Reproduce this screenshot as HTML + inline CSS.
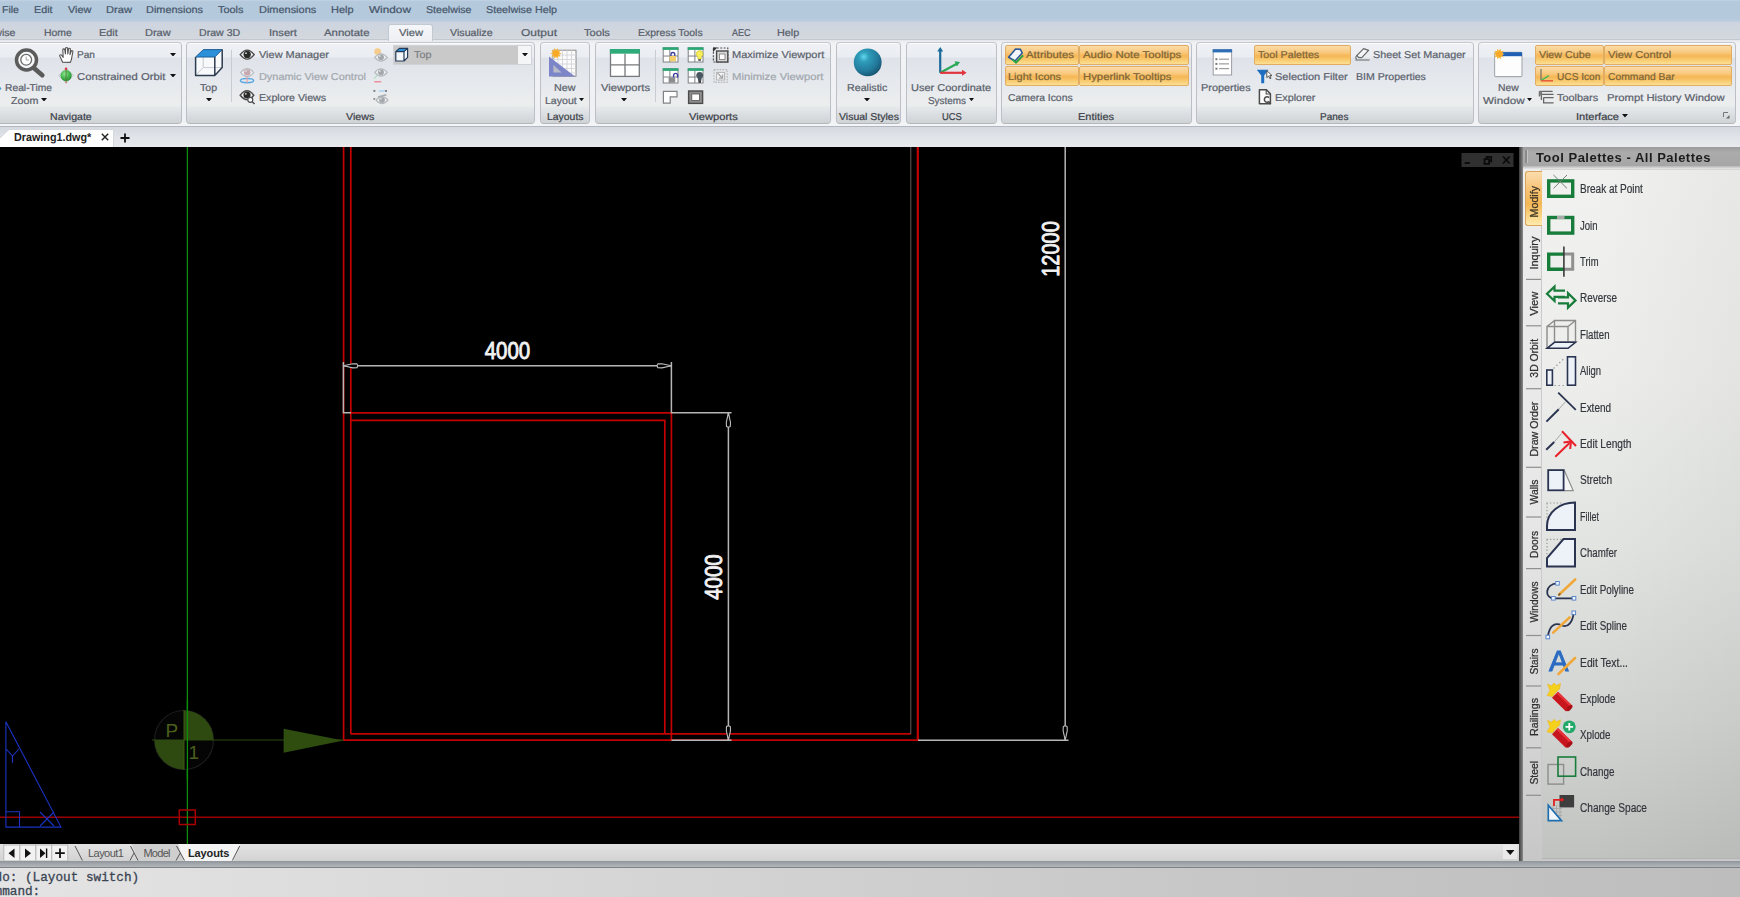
<!DOCTYPE html>
<html lang="en"><head><meta charset="utf-8"><title>Drawing1.dwg</title>
<style>
html,body{margin:0;padding:0}
body{width:1740px;height:897px;overflow:hidden;position:relative;background:#000;font-family:"Liberation Sans",sans-serif}
#app{position:absolute;left:0;top:0;width:1740px;height:897px;overflow:hidden;filter:blur(0.5px)}
.a{position:absolute;display:block}
.t{position:absolute;white-space:pre;line-height:1;display:block}
.pnl{box-sizing:border-box;border:1px solid #c3c7cd;border-radius:4px;
 border-color:#c4c8ce #bcc0c6 #b4b8be #bcc0c6;
 background:linear-gradient(#eff1f5 0,#eaedf1 17%,#dfe3e9 19%,#e5e8ed 45%,#eceeee 78%,#e6e9ec 80%,#d0d3d6 100%);
 box-shadow:inset 0 1px 0 rgba(255,255,255,.8)}
.org{box-sizing:border-box;border:1px solid #e0ad62;border-radius:2px;
 background:linear-gradient(#fbdba8 0,#f9ca80 35%,#f6b655 55%,#f9cb70 78%,#fce095 100%)}
</style></head>
<body>
<div id="app">
<div class="a" style="left:0px;top:0px;width:1740px;height:22px;background:linear-gradient(#c2d3e3 0,#b4c9dc 8%,#b4c9dc 85%,#bfcfdf)"></div>
<div class="a" style="left:0px;top:22px;width:1740px;height:18px;background:linear-gradient(#cdd5e0,#d1d6de 50%,#d4d8df)"></div>
<div class="a" style="left:0px;top:39px;width:1740px;height:1px;background:#c3c8d0"></div>
<div class="a" style="left:0px;top:40px;width:1740px;height:86px;background:linear-gradient(#e4e7ec,#f1f3f5 4%,#eef0f3 90%,#f4f5f7)"></div>
<div class="a" style="left:0px;top:126px;width:1740px;height:1px;background:#b3b8c0"></div>
<div class="a" style="left:0px;top:127px;width:1740px;height:20px;background:linear-gradient(#d5d9e0,#e0e3e8 50%,#e8eaed)"></div>
<span class="t" style="left:2.0px;top:6px;font-size:10px;color:#46566a;transform:scaleX(1.0543);transform-origin:0 0;text-rendering:geometricPrecision;-webkit-text-stroke:0.22px;">File</span>
<span class="t" style="left:34.0px;top:6px;font-size:10px;color:#46566a;transform:scaleX(1.0734);transform-origin:0 0;text-rendering:geometricPrecision;-webkit-text-stroke:0.22px;">Edit</span>
<span class="t" style="left:67.5px;top:6px;font-size:10px;color:#46566a;transform:scaleX(1.0930);transform-origin:0 0;text-rendering:geometricPrecision;-webkit-text-stroke:0.22px;">View</span>
<span class="t" style="left:106.0px;top:6px;font-size:10px;color:#46566a;transform:scaleX(1.1138);transform-origin:0 0;text-rendering:geometricPrecision;-webkit-text-stroke:0.22px;">Draw</span>
<span class="t" style="left:146.0px;top:6px;font-size:10px;color:#46566a;transform:scaleX(1.0909);transform-origin:0 0;text-rendering:geometricPrecision;-webkit-text-stroke:0.22px;">Dimensions</span>
<span class="t" style="left:218.0px;top:6px;font-size:10px;color:#46566a;transform:scaleX(1.0916);transform-origin:0 0;text-rendering:geometricPrecision;-webkit-text-stroke:0.22px;">Tools</span>
<span class="t" style="left:259.3px;top:6px;font-size:10px;color:#46566a;transform:scaleX(1.0947);transform-origin:0 0;text-rendering:geometricPrecision;-webkit-text-stroke:0.22px;">Dimensions</span>
<span class="t" style="left:331.4px;top:6px;font-size:10px;color:#46566a;transform:scaleX(1.0983);transform-origin:0 0;text-rendering:geometricPrecision;-webkit-text-stroke:0.22px;">Help</span>
<span class="t" style="left:368.6px;top:6px;font-size:10px;color:#46566a;transform:scaleX(1.1777);transform-origin:0 0;text-rendering:geometricPrecision;-webkit-text-stroke:0.22px;">Window</span>
<span class="t" style="left:425.5px;top:6px;font-size:10px;color:#46566a;transform:scaleX(1.0628);transform-origin:0 0;text-rendering:geometricPrecision;-webkit-text-stroke:0.22px;">Steelwise</span>
<span class="t" style="left:486.0px;top:6px;font-size:10px;color:#46566a;transform:scaleX(1.0732);transform-origin:0 0;text-rendering:geometricPrecision;-webkit-text-stroke:0.22px;">Steelwise Help</span>
<div class="a" style="left:388px;top:24px;width:45px;height:17px;background:linear-gradient(#f4f6f9,#eef0f3);border:1px solid #c3c9d1;border-bottom:none;border-radius:3px 3px 0 0;box-sizing:border-box"></div>
<span class="t" style="left:-30.3px;top:29px;font-size:10px;color:#565e6a;transform:scaleX(1.0628);transform-origin:0 0;text-rendering:geometricPrecision;-webkit-text-stroke:0.22px;">Steelwise</span>
<span class="t" style="left:43.6px;top:29px;font-size:10px;color:#565e6a;transform:scaleX(1.0454);transform-origin:0 0;text-rendering:geometricPrecision;-webkit-text-stroke:0.22px;">Home</span>
<span class="t" style="left:99.0px;top:29px;font-size:10px;color:#565e6a;transform:scaleX(1.0908);transform-origin:0 0;text-rendering:geometricPrecision;-webkit-text-stroke:0.22px;">Edit</span>
<span class="t" style="left:145.0px;top:29px;font-size:10px;color:#565e6a;transform:scaleX(1.1009);transform-origin:0 0;text-rendering:geometricPrecision;-webkit-text-stroke:0.22px;">Draw</span>
<span class="t" style="left:198.8px;top:29px;font-size:10px;color:#565e6a;transform:scaleX(1.0590);transform-origin:0 0;text-rendering:geometricPrecision;-webkit-text-stroke:0.22px;">Draw 3D</span>
<span class="t" style="left:268.5px;top:29px;font-size:10px;color:#565e6a;transform:scaleX(1.1153);transform-origin:0 0;text-rendering:geometricPrecision;-webkit-text-stroke:0.22px;">Insert</span>
<span class="t" style="left:324.4px;top:29px;font-size:10px;color:#565e6a;transform:scaleX(1.1387);transform-origin:0 0;text-rendering:geometricPrecision;-webkit-text-stroke:0.22px;">Annotate</span>
<span class="t" style="left:398.6px;top:29px;font-size:10px;color:#565e6a;transform:scaleX(1.1209);transform-origin:0 0;text-rendering:geometricPrecision;-webkit-text-stroke:0.22px;">View</span>
<span class="t" style="left:450.4px;top:29px;font-size:10px;color:#565e6a;transform:scaleX(1.0692);transform-origin:0 0;text-rendering:geometricPrecision;-webkit-text-stroke:0.22px;">Visualize</span>
<span class="t" style="left:521.4px;top:29px;font-size:10px;color:#565e6a;transform:scaleX(1.1988);transform-origin:0 0;text-rendering:geometricPrecision;-webkit-text-stroke:0.22px;">Output</span>
<span class="t" style="left:584.3px;top:29px;font-size:10px;color:#565e6a;transform:scaleX(1.1088);transform-origin:0 0;text-rendering:geometricPrecision;-webkit-text-stroke:0.22px;">Tools</span>
<span class="t" style="left:638.4px;top:29px;font-size:10px;color:#565e6a;transform:scaleX(1.0406);transform-origin:0 0;text-rendering:geometricPrecision;-webkit-text-stroke:0.22px;">Express Tools</span>
<span class="t" style="left:731.6px;top:29px;font-size:10px;color:#565e6a;transform:scaleX(0.9046);transform-origin:0 0;text-rendering:geometricPrecision;-webkit-text-stroke:0.22px;">AEC</span>
<span class="t" style="left:777.4px;top:29px;font-size:10px;color:#565e6a;transform:scaleX(1.0788);transform-origin:0 0;text-rendering:geometricPrecision;-webkit-text-stroke:0.22px;">Help</span>
<div class="a pnl" style="left:-6px;top:42px;width:187.5px;height:82px"></div>
<div class="a pnl" style="left:186px;top:42px;width:348.5px;height:82px"></div>
<div class="a pnl" style="left:539.5px;top:42px;width:50.5px;height:82px"></div>
<div class="a pnl" style="left:595px;top:42px;width:236px;height:82px"></div>
<div class="a pnl" style="left:836px;top:42px;width:65px;height:82px"></div>
<div class="a pnl" style="left:906px;top:42px;width:91px;height:82px"></div>
<div class="a pnl" style="left:1001px;top:42px;width:191px;height:82px"></div>
<div class="a pnl" style="left:1195.5px;top:42px;width:278.0px;height:82px"></div>
<div class="a pnl" style="left:1477.5px;top:42px;width:258.0px;height:82px"></div>
<span class="t" style="left:49.7px;top:113px;font-size:10px;color:#3a3f48;transform:scaleX(1.0565);transform-origin:0 0;text-rendering:geometricPrecision;-webkit-text-stroke:0.22px;">Navigate</span>
<span class="t" style="left:345.6px;top:113px;font-size:10px;color:#3a3f48;transform:scaleX(1.0717);transform-origin:0 0;text-rendering:geometricPrecision;-webkit-text-stroke:0.22px;">Views</span>
<span class="t" style="left:546.5px;top:113px;font-size:10px;color:#3a3f48;transform:scaleX(1.0419);transform-origin:0 0;text-rendering:geometricPrecision;-webkit-text-stroke:0.22px;">Layouts</span>
<span class="t" style="left:688.6px;top:113px;font-size:10px;color:#3a3f48;transform:scaleX(1.1158);transform-origin:0 0;text-rendering:geometricPrecision;-webkit-text-stroke:0.22px;">Viewports</span>
<span class="t" style="left:838.7px;top:113px;font-size:10px;color:#3a3f48;transform:scaleX(1.0494);transform-origin:0 0;text-rendering:geometricPrecision;-webkit-text-stroke:0.22px;">Visual Styles</span>
<span class="t" style="left:941.6px;top:113px;font-size:10px;color:#3a3f48;transform:scaleX(0.9373);transform-origin:0 0;text-rendering:geometricPrecision;-webkit-text-stroke:0.22px;">UCS</span>
<span class="t" style="left:1078.4px;top:113px;font-size:10px;color:#3a3f48;transform:scaleX(1.1007);transform-origin:0 0;text-rendering:geometricPrecision;-webkit-text-stroke:0.22px;">Entities</span>
<span class="t" style="left:1320.2px;top:113px;font-size:10px;color:#3a3f48;transform:scaleX(1.0014);transform-origin:0 0;text-rendering:geometricPrecision;-webkit-text-stroke:0.22px;">Panes</span>
<span class="t" style="left:1575.6px;top:113px;font-size:10px;color:#3a3f48;transform:scaleX(1.1048);transform-origin:0 0;text-rendering:geometricPrecision;-webkit-text-stroke:0.22px;">Interface</span>
<svg class="a" style="left:1622.0px;top:114.2px" width="6" height="3.5" viewBox="0 0 6 3.5"><path d="M0 0H6L3.0 3.5Z" fill="#111"/></svg>
<svg class="a" style="left:1723px;top:112px" width="7" height="7" viewBox="0 0 7 7"><path d="M0.5 5V0.5H5" fill="none" stroke="#777"/><path d="M3 6.5H6.5V3Z" fill="#666"/></svg>
<span class="t" style="left:5.0px;top:84px;font-size:10px;color:#5a616c;transform:scaleX(1.0273);transform-origin:0 0;text-rendering:geometricPrecision;-webkit-text-stroke:0.22px;">Real-Time</span>
<span class="t" style="left:10.7px;top:97px;font-size:10px;color:#5a616c;transform:scaleX(1.0680);transform-origin:0 0;text-rendering:geometricPrecision;-webkit-text-stroke:0.22px;">Zoom</span>
<svg class="a" style="left:41.0px;top:97.8px" width="6" height="3.5" viewBox="0 0 6 3.5"><path d="M0 0H6L3.0 3.5Z" fill="#111"/></svg>
<span class="t" style="left:77.0px;top:51px;font-size:10px;color:#5a616c;transform:scaleX(1.0114);transform-origin:0 0;text-rendering:geometricPrecision;-webkit-text-stroke:0.22px;">Pan</span>
<svg class="a" style="left:170.0px;top:52.8px" width="6" height="3.5" viewBox="0 0 6 3.5"><path d="M0 0H6L3.0 3.5Z" fill="#111"/></svg>
<span class="t" style="left:77.0px;top:73px;font-size:10px;color:#5a616c;transform:translateY(-0.5px) scaleX(1.1292);transform-origin:0 0;text-rendering:geometricPrecision;-webkit-text-stroke:0.22px;">Constrained Orbit</span>
<svg class="a" style="left:170.3px;top:73.8px" width="6" height="3.5" viewBox="0 0 6 3.5"><path d="M0 0H6L3.0 3.5Z" fill="#111"/></svg>
<span class="t" style="left:200.0px;top:84px;font-size:10px;color:#5a616c;transform:scaleX(1.0543);transform-origin:0 0;text-rendering:geometricPrecision;-webkit-text-stroke:0.22px;">Top</span>
<svg class="a" style="left:205.6px;top:97.8px" width="6" height="3.5" viewBox="0 0 6 3.5"><path d="M0 0H6L3.0 3.5Z" fill="#111"/></svg>
<div class="a" style="left:231px;top:50px;width:1px;height:52px;background:#c9cdd3"></div>
<span class="t" style="left:258.9px;top:51px;font-size:10px;color:#5a616c;transform:scaleX(1.0965);transform-origin:0 0;text-rendering:geometricPrecision;-webkit-text-stroke:0.22px;">View Manager</span>
<span class="t" style="left:258.9px;top:73px;font-size:10px;color:#a2a7ae;transform:translateY(-0.5px) scaleX(1.0898);transform-origin:0 0;text-rendering:geometricPrecision;-webkit-text-stroke:0.22px;">Dynamic View Control</span>
<span class="t" style="left:258.9px;top:94px;font-size:10px;color:#5a616c;transform:translateY(-0.5px) scaleX(1.0619);transform-origin:0 0;text-rendering:geometricPrecision;-webkit-text-stroke:0.22px;">Explore Views</span>
<div class="a" style="left:392.5px;top:45px;width:139px;height:20px;background:#f4f5f6;border:1px solid #d0d3d8;box-sizing:border-box"></div>
<div class="a" style="left:393.5px;top:46px;width:124.5px;height:18px;background:#c9c9c9"></div>
<span class="t" style="left:414.0px;top:51px;font-size:10px;color:#7c7f84;transform:scaleX(1.0791);transform-origin:0 0;text-rendering:geometricPrecision;-webkit-text-stroke:0.22px;">Top</span>
<svg class="a" style="left:521.5px;top:52.5px" width="6" height="3.5" viewBox="0 0 6 3.5"><path d="M0 0H6L3.0 3.5Z" fill="#111"/></svg>
<span class="t" style="left:554.0px;top:84px;font-size:10px;color:#5a616c;transform:scaleX(1.0742);transform-origin:0 0;text-rendering:geometricPrecision;-webkit-text-stroke:0.22px;">New</span>
<span class="t" style="left:544.7px;top:97px;font-size:10px;color:#5a616c;transform:scaleX(1.0556);transform-origin:0 0;text-rendering:geometricPrecision;-webkit-text-stroke:0.22px;">Layout</span>
<svg class="a" style="left:579.1px;top:98.0px" width="5" height="3.2" viewBox="0 0 5 3.2"><path d="M0 0H5L2.5 3.2Z" fill="#111"/></svg>
<span class="t" style="left:600.5px;top:84px;font-size:10px;color:#5a616c;transform:scaleX(1.1204);transform-origin:0 0;text-rendering:geometricPrecision;-webkit-text-stroke:0.22px;">Viewports</span>
<svg class="a" style="left:621.0px;top:97.8px" width="6" height="3.5" viewBox="0 0 6 3.5"><path d="M0 0H6L3.0 3.5Z" fill="#111"/></svg>
<div class="a" style="left:655px;top:50px;width:1px;height:52px;background:#c9cdd3"></div>
<span class="t" style="left:731.6px;top:51px;font-size:10px;color:#5a616c;transform:scaleX(1.1011);transform-origin:0 0;text-rendering:geometricPrecision;-webkit-text-stroke:0.22px;">Maximize Viewport</span>
<span class="t" style="left:731.6px;top:73px;font-size:10px;color:#a2a7ae;transform:translateY(-0.5px) scaleX(1.1290);transform-origin:0 0;text-rendering:geometricPrecision;-webkit-text-stroke:0.22px;">Minimize Viewport</span>
<span class="t" style="left:847.4px;top:84px;font-size:10px;color:#5a616c;transform:scaleX(1.0662);transform-origin:0 0;text-rendering:geometricPrecision;-webkit-text-stroke:0.22px;">Realistic</span>
<svg class="a" style="left:863.6px;top:97.8px" width="6" height="3.5" viewBox="0 0 6 3.5"><path d="M0 0H6L3.0 3.5Z" fill="#111"/></svg>
<span class="t" style="left:910.7px;top:84px;font-size:10px;color:#5a616c;transform:scaleX(1.1001);transform-origin:0 0;text-rendering:geometricPrecision;-webkit-text-stroke:0.22px;">User Coordinate</span>
<span class="t" style="left:928.0px;top:97px;font-size:10px;color:#5a616c;transform:scaleX(0.9910);transform-origin:0 0;text-rendering:geometricPrecision;-webkit-text-stroke:0.22px;">Systems</span>
<svg class="a" style="left:969.0px;top:98.0px" width="5" height="3.2" viewBox="0 0 5 3.2"><path d="M0 0H5L2.5 3.2Z" fill="#111"/></svg>
<div class="a org" style="left:1005px;top:45px;width:74px;height:19.5px"></div>
<div class="a org" style="left:1079px;top:45px;width:109.70000000000005px;height:19.5px"></div>
<div class="a org" style="left:1005px;top:65.8px;width:74px;height:19.900000000000006px"></div>
<div class="a org" style="left:1079px;top:65.8px;width:109.70000000000005px;height:19.900000000000006px"></div>
<span class="t" style="left:1026.0px;top:51px;font-size:10px;color:#7c6538;transform:scaleX(1.1361);transform-origin:0 0;text-rendering:geometricPrecision;-webkit-text-stroke:0.22px;">Attributes</span>
<span class="t" style="left:1082.8px;top:51px;font-size:10px;color:#7c6538;transform:scaleX(1.1421);transform-origin:0 0;text-rendering:geometricPrecision;-webkit-text-stroke:0.22px;">Audio Note Tooltips</span>
<span class="t" style="left:1007.9px;top:73px;font-size:10px;color:#7c6538;transform:translateY(-0.5px) scaleX(1.0977);transform-origin:0 0;text-rendering:geometricPrecision;-webkit-text-stroke:0.22px;">Light Icons</span>
<span class="t" style="left:1082.8px;top:73px;font-size:10px;color:#7c6538;transform:translateY(-0.5px) scaleX(1.1319);transform-origin:0 0;text-rendering:geometricPrecision;-webkit-text-stroke:0.22px;">Hyperlink Tooltips</span>
<span class="t" style="left:1007.9px;top:94px;font-size:10px;color:#5a616c;transform:translateY(-0.5px) scaleX(1.0378);transform-origin:0 0;text-rendering:geometricPrecision;-webkit-text-stroke:0.22px;">Camera Icons</span>
<span class="t" style="left:1201.4px;top:84px;font-size:10px;color:#5a616c;transform:scaleX(1.0882);transform-origin:0 0;text-rendering:geometricPrecision;-webkit-text-stroke:0.22px;">Properties</span>
<div class="a org" style="left:1254px;top:45px;width:97.29999999999995px;height:19.5px"></div>
<span class="t" style="left:1257.5px;top:51px;font-size:10px;color:#7c6538;transform:scaleX(1.0687);transform-origin:0 0;text-rendering:geometricPrecision;-webkit-text-stroke:0.22px;">Tool Palettes</span>
<span class="t" style="left:1275.0px;top:73px;font-size:10px;color:#5a616c;transform:translateY(-0.5px) scaleX(1.0992);transform-origin:0 0;text-rendering:geometricPrecision;-webkit-text-stroke:0.22px;">Selection Filter</span>
<span class="t" style="left:1275.0px;top:94px;font-size:10px;color:#5a616c;transform:translateY(-0.5px) scaleX(1.0846);transform-origin:0 0;text-rendering:geometricPrecision;-webkit-text-stroke:0.22px;">Explorer</span>
<span class="t" style="left:1373.3px;top:51px;font-size:10px;color:#5a616c;transform:scaleX(1.0758);transform-origin:0 0;text-rendering:geometricPrecision;-webkit-text-stroke:0.22px;">Sheet Set Manager</span>
<span class="t" style="left:1355.6px;top:73px;font-size:10px;color:#5a616c;transform:translateY(-0.5px) scaleX(1.0568);transform-origin:0 0;text-rendering:geometricPrecision;-webkit-text-stroke:0.22px;">BIM Properties</span>
<span class="t" style="left:1497.5px;top:84px;font-size:10px;color:#5a616c;transform:scaleX(1.0342);transform-origin:0 0;text-rendering:geometricPrecision;-webkit-text-stroke:0.22px;">New</span>
<span class="t" style="left:1483.0px;top:97px;font-size:10px;color:#5a616c;transform:scaleX(1.1693);transform-origin:0 0;text-rendering:geometricPrecision;-webkit-text-stroke:0.22px;">Window</span>
<svg class="a" style="left:1526.5px;top:98.0px" width="5" height="3.2" viewBox="0 0 5 3.2"><path d="M0 0H5L2.5 3.2Z" fill="#111"/></svg>
<div class="a org" style="left:1535.4px;top:45px;width:69.0px;height:19.5px"></div>
<div class="a org" style="left:1604.4px;top:45px;width:127.59999999999991px;height:19.5px"></div>
<div class="a org" style="left:1535.4px;top:65.8px;width:69.0px;height:19.900000000000006px"></div>
<div class="a org" style="left:1604.4px;top:65.8px;width:127.59999999999991px;height:19.900000000000006px"></div>
<span class="t" style="left:1538.9px;top:51px;font-size:10px;color:#7c6538;transform:scaleX(1.0729);transform-origin:0 0;text-rendering:geometricPrecision;-webkit-text-stroke:0.22px;">View Cube</span>
<span class="t" style="left:1607.8px;top:51px;font-size:10px;color:#7c6538;transform:scaleX(1.1183);transform-origin:0 0;text-rendering:geometricPrecision;-webkit-text-stroke:0.22px;">View Control</span>
<span class="t" style="left:1556.8px;top:73px;font-size:10px;color:#7c6538;transform:translateY(-0.5px) scaleX(1.0141);transform-origin:0 0;text-rendering:geometricPrecision;-webkit-text-stroke:0.22px;">UCS Icon</span>
<span class="t" style="left:1607.8px;top:73px;font-size:10px;color:#7c6538;transform:translateY(-0.5px) scaleX(1.0346);transform-origin:0 0;text-rendering:geometricPrecision;-webkit-text-stroke:0.22px;">Command Bar</span>
<span class="t" style="left:1556.8px;top:94px;font-size:10px;color:#5a616c;transform:translateY(-0.5px) scaleX(1.0896);transform-origin:0 0;text-rendering:geometricPrecision;-webkit-text-stroke:0.22px;">Toolbars</span>
<span class="t" style="left:1607.4px;top:94px;font-size:10px;color:#5a616c;transform:translateY(-0.5px) scaleX(1.1257);transform-origin:0 0;text-rendering:geometricPrecision;-webkit-text-stroke:0.22px;">Prompt History Window</span>
<svg class="a" style="left:0;top:129px" width="116" height="18" viewBox="0 0 116 18"><path d="M0 18V9L9 0.5H113V18Z" fill="#fff"/><path d="M0 9L9 0.5H113.5V18" fill="none" stroke="#d5d8dc"/></svg>
<span class="t" style="left:13.8px;top:133px;font-size:11.5px;color:#222;font-weight:700;transform:scaleX(0.9365);transform-origin:0 0;text-rendering:geometricPrecision;">Drawing1.dwg*</span>
<svg class="a" style="left:101px;top:132.5px" width="8" height="8" viewBox="0 0 8 8"><path d="M0.8 0.8L7.2 7.2M7.2 0.8L0.8 7.2" stroke="#222" stroke-width="1.4"/></svg>
<svg class="a" style="left:120px;top:133px" width="10" height="10" viewBox="0 0 10 10"><path d="M5 0.5V9.5M0.5 5H9.5" stroke="#111" stroke-width="1.8"/></svg>
<svg class="a" style="left:0;top:42px" width="1740" height="84" viewBox="0 42 1740 84">
<defs><radialGradient id="sph" cx="0.36" cy="0.3" r="0.75"><stop offset="0" stop-color="#5fd8ec"/><stop offset="0.25" stop-color="#2f9cba"/><stop offset="0.7" stop-color="#22789a"/><stop offset="1" stop-color="#17526e"/></radialGradient><radialGradient id="gsp" cx="0.4" cy="0.35" r="0.7"><stop offset="0" stop-color="#8fe68f"/><stop offset="0.6" stop-color="#3fb24a"/><stop offset="1" stop-color="#2a8a36"/></radialGradient></defs>
<path d="M33.3 67.5L42.3 75.3" stroke="#5b5b5b" stroke-width="4.6" stroke-linecap="round"/>
<circle cx="26.5" cy="60" r="10" fill="#f6f7f8" stroke="#5b5b5b" stroke-width="3.5"/>
<circle cx="26.2" cy="59.8" r="5.4" fill="#fff" stroke="#6a6a6a" stroke-width="1.3"/>
<path d="M26.2 56.6V60H29" fill="none" stroke="#9a9a9a" stroke-width="0.9"/>
<circle cx="0" cy="88.5" r="1.2" fill="#3a9ad8"/>
<path d="M62.6 62.2C61.8 60 60.6 57.6 59.8 56.2C59.2 55 60.6 54.2 61.6 55.2L63.2 57.4L62.8 49.8C62.8 48.6 64.6 48.6 64.8 49.8L65.4 54L65.6 48.4C65.7 47.2 67.5 47.2 67.6 48.4L67.8 54L68.6 49C68.8 47.9 70.5 48.1 70.4 49.3L70 54.6L71.2 51.2C71.6 50.2 73.1 50.6 72.9 51.7L71.8 57.4C71.6 59.4 71 61 70.4 62.4Z" fill="#fff" stroke="#555" stroke-width="1.1" stroke-linejoin="round"/>
<path d="M58.6 75.5L66.1 68.2L73.4 75.5L66.1 83Z" fill="#dfe3e4" stroke="#b9bfc0" stroke-width="0.8"/>
<circle cx="66.1" cy="75.6" r="5.6" fill="url(#gsp)"/>
<path d="M66.1 69.5V82" stroke="#5a7a3a" stroke-width="0.9"/>
<circle cx="66.1" cy="68.8" r="1.3" fill="#d8363c"/><circle cx="66.1" cy="82.6" r="1" fill="#c88"/>
<path d="M195.6 57V75.4H214.8L222.2 67.6V49.6L214.8 57Z" fill="#f7f9fb"/>
<path d="M203.2 67.6H222.2M203.2 67.6V50M203.2 67.6L195.6 75.4" stroke="#c5cbd3" stroke-width="1" fill="none"/>
<path d="M195.6 57L203.4 49.6H222.2L214.8 57Z" fill="#2b8fd9" stroke="#1f5f96" stroke-width="1"/>
<path d="M195.6 57V75.4H214.8V57M214.8 75.4L222.2 67.6V49.6" fill="none" stroke="#2e3c50" stroke-width="1.5" stroke-linejoin="round"/>
<path d="M240.2 54.6Q247.2 45.57 254.2 54.6Q247.2 63.63 240.2 54.6Z" fill="#eceef0" stroke="#4a4a4a" stroke-width="1.4"/><circle cx="247.2" cy="54.4" r="3.61" fill="#2a2a2a"/><circle cx="246.0" cy="53.2" r="0.9" fill="#dcdcdc"/>
<path d="M240.7 72.6Q247.2 64.61999999999999 253.7 72.6Q247.2 80.58 240.7 72.6Z" fill="#eceef0" stroke="#b9bcc2" stroke-width="1.2"/><circle cx="247.2" cy="72.39999999999999" r="3.19" fill="#c8a8b0"/><circle cx="246.0" cy="71.19999999999999" r="0.9" fill="#dcdcdc"/>
<ellipse cx="247" cy="80.6" rx="6.6" ry="2.2" fill="none" stroke="#5aa8e0" stroke-width="1.5"/>
<path d="M247 76.5V82.8" stroke="#e6a0a8" stroke-width="1.2"/>
<path d="M240.2 95.2Q247 86.38 253.8 95.2Q247 104.02000000000001 240.2 95.2Z" fill="#eceef0" stroke="#4a4a4a" stroke-width="1.4"/><circle cx="247" cy="95.0" r="3.53" fill="#2a2a2a"/><circle cx="245.8" cy="93.8" r="0.9" fill="#dcdcdc"/>
<circle cx="250.3" cy="99.8" r="2.5" fill="#fff" stroke="#4a4a4a" stroke-width="1.2"/><path d="M252.2 101.8L254.6 104" stroke="#4a4a4a" stroke-width="1.5"/>
<circle cx="377.6" cy="51.6" r="3.4" fill="#f7c67a" opacity="0.85"/>
<path d="M374.7 57.4Q381 50.05 387.3 57.4Q381 64.75 374.7 57.4Z" fill="#eceef0" stroke="#b4b7bb" stroke-width="1.1"/><circle cx="381" cy="57.199999999999996" r="2.94" fill="#a4a7ab"/><circle cx="379.8" cy="56.0" r="0.9" fill="#dcdcdc"/>
<path d="M374.7 72.4Q381 65.05000000000001 387.3 72.4Q381 79.75 374.7 72.4Z" fill="#eceef0" stroke="#b4b7bb" stroke-width="1.1"/><circle cx="381" cy="72.2" r="2.94" fill="#a4a7ab"/><circle cx="379.8" cy="71.0" r="0.9" fill="#dcdcdc"/>
<path d="M374.3 78.5L377 75.5" stroke="#8fd8a0" stroke-width="1"/><path d="M374.2 81.8H381.2" stroke="#f07a8a" stroke-width="1.2"/>
<path d="M374 91H386" stroke="#a9d4f4" stroke-width="1.6" stroke-dasharray="1.6 3.2 7 3.2"/><rect x="373.4" y="90" width="1.8" height="1.8" fill="#777"/><rect x="385.2" y="90" width="1.8" height="1.8" fill="#777"/><rect x="373.4" y="98" width="1.8" height="1.8" fill="#888"/>
<path d="M376.0 100.2Q382 93.06 388.0 100.2Q382 107.34 376.0 100.2Z" fill="#eceef0" stroke="#b4b7bb" stroke-width="1.1"/><circle cx="382" cy="100.0" r="2.86" fill="#a4a7ab"/><circle cx="380.8" cy="98.8" r="0.9" fill="#dcdcdc"/>
<path d="M378 97L386.4 94.8" stroke="#a8abaf" stroke-width="1.6"/>
<path d="M395.8 51.6V61H404L407.6 57.4V48.6L404 51.6Z" fill="#f4f7fa"/>
<path d="M395.8 51.6L399.4 48.4H407.6L404 51.6Z" fill="#2b8fd9"/>
<path d="M395.8 51.6V61H404V51.6H395.8L399.4 48.4H407.6V57.4L404 61M404 51.6L407.6 48.4" fill="none" stroke="#243a58" stroke-width="1.2" stroke-linejoin="round"/>
<rect x="553" y="50.2" width="23" height="26" fill="#fbfbfb" stroke="#8a8a8a" stroke-width="1"/>
<path d="M558 50.2V76M562.5 50.2V76M567 50.2V76M571.5 50.2V76M553 55H576M553 59.5H576M553 64H576M553 68.5H576M553 73H576" stroke="#d4d4d8" stroke-width="0.9"/>
<path d="M549 56.4V76.4H575Z" fill="#7d85c9"/>
<path d="M553.4 65V72.6H561.6Z" fill="#b9bcc8"/>
<path d="M561.6 53.4L559.3 54.5L560.5 56.7L558.0 56.2L557.7 58.7L556.0 56.9L554.3 58.7L554.0 56.2L551.5 56.7L552.7 54.5L550.4 53.4L552.7 52.3L551.5 50.1L554.0 50.6L554.3 48.1L556.0 49.9L557.7 48.1L558.0 50.6L560.5 50.1L559.3 52.3Z" fill="#f6b73c"/><circle cx="556" cy="53.4" r="2.8" fill="#f9a825"/>
<rect x="610.5" y="50" width="28.8" height="26.4" fill="#fff" stroke="#77797c" stroke-width="1.3"/>
<rect x="609.9" y="49" width="30" height="4.7" fill="#2eab78"/>
<path d="M625 53.7V76.4M610.5 64.9H639.3" stroke="#77797c" stroke-width="1.3"/>
<rect x="663.2" y="47.8" width="14.8" height="14.2" fill="#fff" stroke="#7e8084" stroke-width="1"/><rect x="662.7" y="47.3" width="15.8" height="2.6" fill="#2aa874"/><path d="M669.86 49.8V62.0M663.2 56.035999999999994H678.0" stroke="#7e8084" stroke-width="1"/>
<rect x="669.6" y="56" width="6.4" height="5.2" rx="0.8" fill="#f4cf6a"/><path d="M671 56V54.4A1.9 1.9 0 0 1 674.8 54.4V56" fill="none" stroke="#3a3aa0" stroke-width="1.3"/>
<rect x="688.2" y="47.8" width="14.8" height="14.2" fill="#fff" stroke="#7e8084" stroke-width="1"/><rect x="687.7" y="47.3" width="15.8" height="2.6" fill="#2aa874"/><path d="M694.86 49.8V62.0M688.2 56.035999999999994H703.0" stroke="#7e8084" stroke-width="1"/>
<path d="M699.6 50.6A3.3 3.3 0 0 1 701.6 56.6L701.2 59H698L697.6 56.6A3.3 3.3 0 0 1 699.6 50.6Z" fill="#f6ee5a" stroke="#c8b820" stroke-width="0.6"/><rect x="698.3" y="59" width="2.6" height="2" fill="#6a6a6a"/>
<rect x="663.2" y="68.8" width="14.8" height="14.2" fill="#fff" stroke="#7e8084" stroke-width="1"/><rect x="662.7" y="68.3" width="15.8" height="2.6" fill="#2aa874"/><path d="M669.86 70.8V83.0M663.2 77.036H678.0" stroke="#7e8084" stroke-width="1"/>
<rect x="668.6" y="77.6" width="6.6" height="5" fill="#8a8c8e"/><path d="M673.6 77.6V75.4A2 2 0 0 1 677.6 75.4V77.4" fill="none" stroke="#3a3aa0" stroke-width="1.4"/>
<rect x="688.2" y="68.8" width="14.8" height="14.2" fill="#fff" stroke="#7e8084" stroke-width="1"/><rect x="687.7" y="68.3" width="15.8" height="2.6" fill="#2aa874"/><path d="M694.86 70.8V83.0M688.2 77.036H703.0" stroke="#7e8084" stroke-width="1"/>
<path d="M699.8 72A3.3 3.3 0 0 1 701.8 78L701.2 81H698.2L697.6 78A3.3 3.3 0 0 1 699.8 72Z" fill="#4a5660"/><rect x="698.4" y="81" width="2.6" height="1.8" fill="#3a3a3a"/>
<path d="M663.4 91.4H677V96.8H670.2V103.2H663.4Z" fill="#fff" stroke="#808285" stroke-width="1.2"/>
<rect x="688.6" y="91" width="14" height="12.4" fill="#8e8e8e" stroke="#4c4c4c" stroke-width="1.4"/><rect x="691.8" y="94" width="7.6" height="6.4" fill="#fff" stroke="#555" stroke-width="0.8"/>
<rect x="713.4" y="48" width="14.4" height="14" fill="none" stroke="#555" stroke-width="1.2" stroke-dasharray="2 1.4"/>
<rect x="716.6" y="51" width="11.2" height="11" fill="#d8d8d8" stroke="#4a4a4a" stroke-width="1.4"/><rect x="719.4" y="54" width="5.6" height="5.4" fill="#fff" stroke="#777" stroke-width="0.8"/>
<path d="M713 47.6H717.4L713 52Z" fill="#333"/>
<rect x="714" y="69.6" width="13.2" height="12.8" fill="#e6e7e8" stroke="#b4b6b9" stroke-width="1.1" stroke-dasharray="1.6 1.2"/>
<rect x="716.6" y="72.4" width="8" height="7.6" fill="#f6f6f6" stroke="#b0b2b5" stroke-width="1"/><path d="M717.6 73.2L722.2 77.8M722.6 74.4V78.2H718.8" fill="none" stroke="#a4a6a9" stroke-width="1.3"/>
<circle cx="867.7" cy="62.4" r="13.9" fill="url(#sph)"/>
<path d="M940.2 72.8V50" stroke="#1b6a9c" stroke-width="2.2"/><path d="M937.2 51.4L940.2 47L943.2 51.4Z" fill="#1b6a9c"/>
<path d="M940.2 72.8L956.4 64" stroke="#2aa858" stroke-width="2.2"/><path d="M954.6 61.2L960 62L956.8 66.4Z" fill="#2aa858"/>
<path d="M940.2 72.8H962.5" stroke="#e0343c" stroke-width="2.2"/><path d="M962 69.8L966.6 72.8L962 75.8Z" fill="#e0343c"/>
<path d="M1008.6 57.2L1015.6 49L1020.4 49.4L1022.2 53L1015 61Z" fill="#f2f6fb" stroke="#2a5a9a" stroke-width="1.6" stroke-linejoin="round"/>
<path d="M1012.6 59.6L1016 62.6L1023.2 55.4" fill="none" stroke="#2da04a" stroke-width="2"/>
<rect x="1213.2" y="50" width="18.4" height="25" fill="#fff" stroke="#9a9da2" stroke-width="1"/>
<rect x="1212.7" y="49.2" width="19.4" height="3.2" fill="#2f6db5"/>
<rect x="1215.4" y="58.2" width="2" height="2" fill="#777"/><path d="M1219 59.2H1229" stroke="#888" stroke-width="1"/>
<rect x="1215.4" y="62.9" width="2" height="2" fill="#777"/><path d="M1219 63.9H1229" stroke="#888" stroke-width="1"/>
<rect x="1215.4" y="67.7" width="2" height="2" fill="#777"/><path d="M1219 68.7H1229" stroke="#888" stroke-width="1"/>
<path d="M1256.8 69.8H1268.4L1264.2 75.4V83.2H1261.2V75.4Z" fill="#1f6fc0"/>
<path d="M1266.8 70.6V77.6L1268.6 76L1270 78.8L1271 78.2L1269.8 75.6H1272Z" fill="#fff" stroke="#444" stroke-width="0.9" stroke-linejoin="round"/>
<path d="M1259.4 89.8H1266.4L1270.4 93.8V103.8H1259.4Z" fill="#fbfbfb" stroke="#4a4a4a" stroke-width="1.5" stroke-linejoin="round"/>
<path d="M1266.2 89.8V94H1270.4" fill="none" stroke="#4a4a4a" stroke-width="1.1"/>
<path d="M1269 97.6A2.7 2.7 0 1 0 1269 101.4" fill="none" stroke="#4a4a4a" stroke-width="1.5"/><path d="M1268.6 101.6L1270.8 104" stroke="#4a4a4a" stroke-width="1.4"/>
<path d="M1357 55.4L1363.6 48.6L1368.6 50.4L1362 57.4Q1358.6 58.6 1357 55.4Z" fill="#f4f5f6" stroke="#666" stroke-width="1.2" stroke-linejoin="round"/>
<path d="M1355.4 60H1369.6" stroke="#777" stroke-width="1.2"/><path d="M1357 55.4Q1354.6 57.6 1356.8 59.4" fill="none" stroke="#666" stroke-width="1.1"/>
<rect x="1494.6" y="52.4" width="27.4" height="24.2" rx="1.2" fill="#fdfdfd" stroke="#a6a9ae" stroke-width="1.1"/>
<rect x="1496" y="52.2" width="26" height="4" fill="#1f5fb4"/>
<path d="M1504.6 54.0L1502.3 55.1L1503.5 57.3L1501.0 56.8L1500.7 59.3L1499.0 57.5L1497.3 59.3L1497.0 56.8L1494.5 57.3L1495.7 55.1L1493.4 54.0L1495.7 52.9L1494.5 50.7L1497.0 51.2L1497.3 48.7L1499.0 50.5L1500.7 48.7L1501.0 51.2L1503.5 50.7L1502.3 52.9Z" fill="#f6b73c"/><circle cx="1499" cy="54" r="2.8" fill="#f9a825"/>
<path d="M1541 69V80.4" stroke="#666" stroke-width="1.1"/><path d="M1541 80.4L1549 75.6" stroke="#4ab85a" stroke-width="1.5"/><path d="M1541 80.8H1553" stroke="#e85a3a" stroke-width="1.5"/>
<path d="M1539.4 91.4H1552.6M1539.4 91.4V96.4M1541.4 94.4H1553.6M1541.4 94.4V100M1543.6 97.6H1553.6M1543.6 97.6V102.8H1553.6" fill="none" stroke="#666" stroke-width="1.3"/>
<rect x="1539" y="91" width="3" height="4.4" fill="#777"/>
</svg>
<svg class="a" style="left:0;top:147px" width="1519" height="697" viewBox="0 147 1519 697" shape-rendering="auto">
<rect x="0" y="147" width="1519" height="697" fill="#000"/>
<path d="M0 817.2H1519" stroke="#9c0000" stroke-width="1.6"/>
<path d="M187.4 147V844" stroke="#0b8e0b" stroke-width="1.3"/>
<rect x="179.3" y="810" width="16" height="14.5" fill="none" stroke="#a80000" stroke-width="1.5"/>
<g stroke="#c40000" stroke-width="1.7" fill="none">
<path d="M343.6 147V740.2"/>
<path d="M350.8 147V734"/>
<path d="M917.8 147V740.2" stroke-width="2.2"/>
<path d="M343 740.2H918"/>
<path d="M350.8 733.8H911"/>
<path d="M350.8 412.8H671.4V740"/>
<path d="M350.8 420.4H664.8V734"/>
</g>
<path d="M910.8 147V734" stroke="#6a5a5a" stroke-width="1"/>
<g stroke="#b6b6b6" stroke-width="1.5" fill="none">
<path d="M343.4 362V412.8H351"/>
<path d="M343.4 365.8H671.4"/>
<path d="M671.4 362V412.8H731.5"/>
<path d="M728.4 412.8V740.2"/>
<path d="M671.4 740.2H731.5"/>
<path d="M1065.2 147V740.2"/>
<path d="M918 740.2H1068.5"/>
</g>
<g stroke="#bdbdbd" stroke-width="1.1" fill="#000" stroke-linejoin="round">
<path d="M343.4 365.8L352.9 367.9L357.0 367.7L357.8 365.8L357.0 363.9L352.9 363.7Z"/>
<path d="M671.4 365.8L661.9 367.9L657.8 367.7L657.0 365.8L657.8 363.9L661.9 363.7Z"/>
<path d="M728.4 412.8L730.5 422.3L730.3 426.4L728.4 427.2L726.5 426.4L726.3 422.3Z"/>
<path d="M728.4 740.2L730.5 730.7L730.3 726.6L728.4 725.8L726.5 726.6L726.3 730.7Z"/>
<path d="M1065.2 740.2L1067.3 730.7L1067.1 726.6L1065.2 725.8L1063.3 726.6L1063.1 730.7Z"/>
</g>
<g fill="#f2f2f2" stroke="#f2f2f2" stroke-width="0.9" stroke-linejoin="round" font-family="Liberation Sans, sans-serif" font-size="23.8" text-anchor="middle">
<text x="507.4" y="359" textLength="45.5" lengthAdjust="spacingAndGlyphs">4000</text>
<text transform="translate(721.7 577) rotate(-90)" textLength="45.5" lengthAdjust="spacingAndGlyphs">4000</text>
<text transform="translate(1058.8 249) rotate(-90)" textLength="55.5" lengthAdjust="spacingAndGlyphs">12000</text>
</g>
<circle cx="184" cy="740" r="29.5" fill="#050505" stroke="#1c1c1c" stroke-width="1.2"/>
<path d="M184 740V710.5A29.5 29.5 0 0 1 213.5 740Z" fill="#2f4a10"/>
<path d="M184 740V769.5A29.5 29.5 0 0 1 154.5 740Z" fill="#2f4a10"/>
<path d="M152 740H344" stroke="#2c4a10" stroke-width="1.2"/>
<path d="M184 710V770" stroke="#3a5a14" stroke-width="1"/>
<path d="M283.6 728.8V752.8L343.5 740.4Z" fill="#2f4d0f"/>
<text x="165.5" y="737" font-family="Liberation Sans, sans-serif" font-size="19" fill="#4a5f1c">P</text>
<text x="188.5" y="759" font-family="Liberation Sans, sans-serif" font-size="19" fill="#4a5f1c">1</text>
<path d="M187.4 700V780" stroke="#0b8e0b" stroke-width="1.3"/>
<g stroke="#1a34c4" stroke-width="1.1" fill="none">
<path d="M5.9 721.7V827.1H61Z"/>
<path d="M5.9 811.7H19.5V827"/>
<path d="M6 749L12.5 756L19 749M12.5 756V763"/>
<path d="M40 812L54 826M54 812L40 826"/>
</g>
<rect x="1461.5" y="153" width="52" height="14" fill="#303030"/>
<g stroke="#0a0a0a" stroke-width="1.8" fill="none"><path d="M1464.6 163H1470"/><path d="M1484.5 159.2h4.6v4.6h-4.6zM1486.6 159v-2.2h4.6v4.6h-2"/><path d="M1503 156.5L1509.6 163.5M1509.6 156.5L1503 163.5"/></g>
</svg>
<div class="a" style="left:1519px;top:147px;width:4px;height:715px;background:linear-gradient(90deg,#3a3a3a,#8a8a8a)"></div>
<div class="a" style="left:1523px;top:147px;width:217px;height:19px;background:linear-gradient(#9c9c9c,#ababab 30%,#a6a6a6)"></div>
<div class="a" style="left:1525px;top:150px;width:2px;height:13px;background:#8a8a8a;border-right:1px solid #c4c4c4"></div>
<span class="t" style="left:1535.9px;top:151px;font-size:13px;color:#1c1c1c;font-weight:700;letter-spacing:0.500px;">Tool Palettes - All Palettes</span>
<div class="a" style="left:1523px;top:166px;width:18px;height:696px;background:linear-gradient(#ecedec,#e6e7e6 50%,#d4d5d4 80%,#c6c7c6)"></div>
<div class="a" style="left:1541px;top:169px;width:199px;height:690px;background:linear-gradient(90deg,rgba(0,0,0,0) 25%,rgba(0,0,0,.04)),linear-gradient(#f1f2f0 0,#edeeec 30%,#e2e4e2 55%,#d2d4d2 80%,#c1c3c1 100%);border-left:1px solid #c9cac9;border-top:1px solid #d5d6d5;border-bottom:1px solid #b4b5b4;box-sizing:border-box"></div>
<div class="a" style="left:1523px;top:166px;width:217px;height:3px;background:linear-gradient(#b5b5b5,#e8e8e8)"></div>
<div class="a" style="left:1523px;top:858.5px;width:217px;height:3px;background:linear-gradient(#c4c5c4,#cdcecd)"></div>
<div class="a" style="left:1524.5px;top:171px;width:17px;height:55px;box-sizing:border-box;border:1px solid #d9a55a;border-right:none;border-radius:3px 0 0 3px;background:linear-gradient(#fbdcae,#f7c272 35%,#f5b755 60%,#fbd88a 85%,#fde9b0)"></div>
<svg class="a" style="left:1519px;top:147px" width="221" height="715" viewBox="1519 147 221 715">
<g font-family="Liberation Sans, sans-serif" font-size="10.5" fill="#303030" stroke="#303030" stroke-width="0.25" text-anchor="middle">
<text transform="translate(1537.6 201.7) rotate(-90)" textLength="31.4" lengthAdjust="spacingAndGlyphs" fill="#4a3a20">Modify</text>
<text transform="translate(1537.6 253.1) rotate(-90)" textLength="33" lengthAdjust="spacingAndGlyphs">Inquiry</text>
<text transform="translate(1537.6 303.7) rotate(-90)" textLength="24" lengthAdjust="spacingAndGlyphs">View</text>
<text transform="translate(1537.6 358.3) rotate(-90)" textLength="38.7" lengthAdjust="spacingAndGlyphs">3D Orbit</text>
<text transform="translate(1537.6 429.1) rotate(-90)" textLength="55" lengthAdjust="spacingAndGlyphs">Draw Order</text>
<text transform="translate(1537.6 492) rotate(-90)" textLength="25" lengthAdjust="spacingAndGlyphs">Walls</text>
<text transform="translate(1537.6 544.4) rotate(-90)" textLength="27" lengthAdjust="spacingAndGlyphs">Doors</text>
<text transform="translate(1537.6 602) rotate(-90)" textLength="41" lengthAdjust="spacingAndGlyphs">Windows</text>
<text transform="translate(1537.6 661.5) rotate(-90)" textLength="26" lengthAdjust="spacingAndGlyphs">Stairs</text>
<text transform="translate(1537.6 717) rotate(-90)" textLength="38" lengthAdjust="spacingAndGlyphs">Railings</text>
<text transform="translate(1537.6 772.8) rotate(-90)" textLength="23.6" lengthAdjust="spacingAndGlyphs">Steel</text>
</g>
<g stroke="#8e8f8e" stroke-width="1.2">
<path d="M1526 279.4H1541"/>
<path d="M1526 325.8H1541"/>
<path d="M1526 388.7H1541"/>
<path d="M1526 467.3H1541"/>
<path d="M1526 517H1541"/>
<path d="M1526 568.6H1541"/>
<path d="M1526 635.5H1541"/>
<path d="M1526 686H1541"/>
<path d="M1526 747.8H1541"/>
<path d="M1526 795.3H1541"/>
</g>
<rect x="1548.7" y="180.9" width="24" height="15.4" fill="none" stroke="#187c3a" stroke-width="3.4"/>
<path d="M1553.5 175L1567 188.4M1567 175L1553.5 188.4" stroke="#6f7f74" stroke-width="1"/>
<rect x="1548.7" y="217.5" width="24" height="15.6" fill="none" stroke="#187c3a" stroke-width="3.4"/>
<path d="M1557 217.5H1564.5" stroke="#a9aaa9" stroke-width="3"/>
<path d="M1564 254.1H1572.7V269.2H1564" fill="none" stroke="#8f908f" stroke-width="3"/>
<path d="M1564 254.1H1548.7V269.2H1564" fill="none" stroke="#187c3a" stroke-width="3.4"/>
<path d="M1563.9 246.6V276.7" stroke="#3a3a3a" stroke-width="1.6"/>
<g fill="none" stroke="#187c3a" stroke-width="2.2" stroke-linejoin="miter">
<path d="M1565 290.6H1554.5V286.6L1547 293.8L1554.5 301V296.8H1565"/>
<path d="M1558 297.4H1568V293.2L1575.5 300.4L1568 307.6V303.4H1558"/>
</g>
<g fill="none" stroke="#8b8c8b" stroke-width="1.4">
<path d="M1547 326.5H1568V348H1547ZM1554.5 320.5H1575.5V342H1554.5ZM1547 326.5L1554.5 320.5M1568 326.5L1575.5 320.5"/>
</g>
<path d="M1547 348.3L1554.5 342.3H1575.5L1568 348.3Z" fill="#edf2f9" stroke="#2a3350" stroke-width="1.6"/>
<rect x="1546.8" y="370" width="5.6" height="15.2" fill="#edf2f9" stroke="#2a3350" stroke-width="1.6"/>
<rect x="1567.5" y="356.8" width="8" height="28.4" fill="#edf2f9" stroke="#2a3350" stroke-width="1.6"/>
<path d="M1553.5 368.5L1564 358.5M1554.5 385.5H1565" stroke="#9a9b9a" stroke-width="1.2" stroke-dasharray="1.4 2.6"/>
<path d="M1546.4 421.6L1558.8 409.2" stroke="#2a3350" stroke-width="2"/>
<path d="M1558.8 409.2L1565.5 401.7" stroke="#a6a7a6" stroke-width="1"/>
<path d="M1558.2 392.6L1575.8 409.8" stroke="#2a3350" stroke-width="1.8"/>
<path d="M1546.2 449.8L1554.2 442" stroke="#2a3350" stroke-width="2"/>
<path d="M1554.2 442L1561.5 433.5" stroke="#a6a7a6" stroke-width="1"/>
<path d="M1562 431.3L1576 446" stroke="#e8212b" stroke-width="2"/>
<path d="M1555.3 456.8L1569.5 443" stroke="#e8212b" stroke-width="2"/>
<path d="M1563.5 442.5L1571 441.5L1570.2 449" fill="none" stroke="#e8212b" stroke-width="2"/>
<path d="M1564 469.8L1573.2 490.6H1564" fill="#f4f5f4" stroke="#8d8e8d" stroke-width="1.2"/>
<rect x="1548.2" y="470.1" width="15.4" height="20.2" fill="#edf2f9" stroke="#2a3350" stroke-width="1.8"/>
<path d="M1546.5 503H1562M1547 503V519" stroke="#9a9b9a" stroke-width="1.2" stroke-dasharray="1.4 2"/>
<path d="M1547 530V526C1547 512 1560 502.6 1575 502.6V530Z" fill="#edf2f9" stroke="#2a3350" stroke-width="2" stroke-linejoin="miter"/>
<path d="M1546.5 539.3H1562M1547 539.3V555" stroke="#9a9b9a" stroke-width="1.2" stroke-dasharray="1.4 2"/>
<path d="M1547 566.4V558L1563.5 539H1575V566.4Z" fill="#edf2f9" stroke="#2a3350" stroke-width="2" stroke-linejoin="miter"/>
<path d="M1557.5 583.3C1544.5 584 1544.5 598.3 1553.4 598.3H1574" fill="none" stroke="#2a3350" stroke-width="1.8"/>
<rect x="1555.7" y="581.5" width="3.6" height="3.6" fill="#f4f8ff" stroke="#5b86c8" stroke-width="1"/>
<rect x="1551.6000000000001" y="596.5" width="3.6" height="3.6" fill="#f4f8ff" stroke="#5b86c8" stroke-width="1"/>
<rect x="1572.2" y="596.5" width="3.6" height="3.6" fill="#f4f8ff" stroke="#5b86c8" stroke-width="1"/>
<path d="M1559.2 594.5L1575.2 579.5" stroke="#f0a83a" stroke-width="2.6" stroke-linecap="round"/>
<path d="M1558.4 595.3L1560.4 593.4" stroke="#7a5a2a" stroke-width="1.6"/>
<path d="M1547.8 637C1549.5 624 1556 622.5 1562 625.5C1568 628 1572.5 622 1573.8 612.8" fill="none" stroke="#2a3350" stroke-width="1.8"/>
<rect x="1546.0" y="635.2" width="3.6" height="3.6" fill="#f4f8ff" stroke="#5b86c8" stroke-width="1"/>
<rect x="1572.0" y="611.0" width="3.6" height="3.6" fill="#f4f8ff" stroke="#5b86c8" stroke-width="1"/>
<path d="M1553.2 632.6L1569.6 617.4" stroke="#f0a83a" stroke-width="2.6" stroke-linecap="round"/>
<text x="1549" y="671.3" font-family="Liberation Sans, sans-serif" font-size="29" fill="#2b6bc2" stroke="#2b6bc2" stroke-width="0.9" textLength="19.5" lengthAdjust="spacingAndGlyphs">A</text>
<path d="M1558.5 674L1575 658" stroke="#f0a83a" stroke-width="2.6" stroke-linecap="round"/>
<path d="M1547.5 684L1551.5 686L1554 683L1556.5 685.5L1560.5 683.5L1559.5 689L1556 692L1552.5 696.5L1547 695.5L1550 690.5Z" fill="#f4d21c" stroke="#f0b020" stroke-width="0.6"/>
<path d="M1555 694.8L1569 708.5" stroke="#c8161e" stroke-width="8.6" stroke-linecap="butt"/>
<path d="M1557.4 692.6L1571.4 706.3" stroke="#e8353a" stroke-width="2.2"/>
<ellipse cx="1569.4" cy="708.1" rx="3.9" ry="1.9" transform="rotate(-45 1569.4 708.1)" fill="#a80f16"/>
<path d="M1547.5 720.36L1551.5 722.36L1554 719.36L1556.5 721.86L1560.5 719.86L1559.5 725.36L1556 728.36L1552.5 732.86L1547 731.86L1550 726.86Z" fill="#f4d21c" stroke="#f0b020" stroke-width="0.6"/>
<path d="M1555 731.16L1569 744.86" stroke="#c8161e" stroke-width="8.6" stroke-linecap="butt"/>
<path d="M1557.4 728.96L1571.4 742.66" stroke="#e8353a" stroke-width="2.2"/>
<ellipse cx="1569.4" cy="744.46" rx="3.9" ry="1.9" transform="rotate(-45 1569.4 744.46)" fill="#a80f16"/>
<circle cx="1569.3" cy="726.8" r="6.4" fill="#22a868"/>
<path d="M1569.3 723V730.6M1565.5 726.8H1573.1" stroke="#fff" stroke-width="1.8"/>
<rect x="1548" y="764.5" width="15.6" height="19.6" fill="none" stroke="#8c8d8c" stroke-width="1.4"/>
<rect x="1558" y="757" width="17.6" height="19.2" fill="none" stroke="#187c3a" stroke-width="1.6"/>
<rect x="1559.5" y="795" width="14.6" height="12.4" fill="#3e3e3e"/>
<g stroke="#a9aaa9" stroke-width="1"><path d="M1553 805V820M1556.5 805V820M1560 808V820M1550 808.5H1562M1550 812H1562M1550 815.5H1562"/></g>
<path d="M1548.3 805.2V820.6H1561.5Z" fill="#f2f6fa" stroke="#1f6fb0" stroke-width="1.7"/>
<path d="M1554 806V799.8H1561.5" fill="none" stroke="#e02020" stroke-width="1.8"/>
<circle cx="1562" cy="799.8" r="1.7" fill="#e02020"/>
</svg>
<span class="t" style="left:1579.5px;top:183px;font-size:12px;color:#33363c;transform:scaleX(0.8345);transform-origin:0 0;-webkit-text-stroke:0.2px;">Break at Point</span>
<span class="t" style="left:1579.5px;top:220px;font-size:12px;color:#33363c;transform:scaleX(0.7949);transform-origin:0 0;-webkit-text-stroke:0.2px;">Join</span>
<span class="t" style="left:1579.5px;top:256px;font-size:12px;color:#33363c;transform:scaleX(0.7857);transform-origin:0 0;-webkit-text-stroke:0.2px;">Trim</span>
<span class="t" style="left:1579.5px;top:292px;font-size:12px;color:#33363c;transform:scaleX(0.8280);transform-origin:0 0;-webkit-text-stroke:0.2px;">Reverse</span>
<span class="t" style="left:1579.5px;top:329px;font-size:12px;color:#33363c;transform:scaleX(0.8041);transform-origin:0 0;-webkit-text-stroke:0.2px;">Flatten</span>
<span class="t" style="left:1579.5px;top:365px;font-size:12px;color:#33363c;transform:scaleX(0.7869);transform-origin:0 0;-webkit-text-stroke:0.2px;">Align</span>
<span class="t" style="left:1579.5px;top:402px;font-size:12px;color:#33363c;transform:scaleX(0.8298);transform-origin:0 0;-webkit-text-stroke:0.2px;">Extend</span>
<span class="t" style="left:1579.5px;top:438px;font-size:12px;color:#33363c;transform:scaleX(0.8482);transform-origin:0 0;-webkit-text-stroke:0.2px;">Edit Length</span>
<span class="t" style="left:1579.5px;top:474px;font-size:12px;color:#33363c;transform:scaleX(0.8418);transform-origin:0 0;-webkit-text-stroke:0.2px;">Stretch</span>
<span class="t" style="left:1579.5px;top:511px;font-size:12px;color:#33363c;transform:scaleX(0.7497);transform-origin:0 0;-webkit-text-stroke:0.2px;">Fillet</span>
<span class="t" style="left:1579.5px;top:547px;font-size:12px;color:#33363c;transform:scaleX(0.8041);transform-origin:0 0;-webkit-text-stroke:0.2px;">Chamfer</span>
<span class="t" style="left:1579.5px;top:584px;font-size:12px;color:#33363c;transform:scaleX(0.8176);transform-origin:0 0;-webkit-text-stroke:0.2px;">Edit Polyline</span>
<span class="t" style="left:1579.5px;top:620px;font-size:12px;color:#33363c;transform:scaleX(0.8192);transform-origin:0 0;-webkit-text-stroke:0.2px;">Edit Spline</span>
<span class="t" style="left:1579.5px;top:657px;font-size:12px;color:#33363c;transform:scaleX(0.8600);transform-origin:0 0;-webkit-text-stroke:0.2px;">Edit Text...</span>
<span class="t" style="left:1579.5px;top:693px;font-size:12px;color:#33363c;transform:scaleX(0.8184);transform-origin:0 0;-webkit-text-stroke:0.2px;">Explode</span>
<span class="t" style="left:1579.5px;top:729px;font-size:12px;color:#33363c;transform:scaleX(0.8161);transform-origin:0 0;-webkit-text-stroke:0.2px;">Xplode</span>
<span class="t" style="left:1579.5px;top:766px;font-size:12px;color:#33363c;transform:scaleX(0.8205);transform-origin:0 0;-webkit-text-stroke:0.2px;">Change</span>
<span class="t" style="left:1579.5px;top:802px;font-size:12px;color:#33363c;transform:scaleX(0.8438);transform-origin:0 0;-webkit-text-stroke:0.2px;">Change Space</span>
<div class="a" style="left:0px;top:844px;width:1519px;height:18px;background:linear-gradient(#e2e2e2,#d9d9d9 60%,#d0d0d0)"></div>
<svg class="a" style="left:0;top:844px" width="1519" height="18" viewBox="0 844 1519 18">
<path d="M132 844H178L184 861H138Z" fill="#cfcfcf"/>
<path d="M178 844H240L233 861H184Z" fill="#f4f4f4"/>
<rect x="3.8" y="845" width="16" height="16" fill="#f2f2f2" stroke="#b9b9b9" stroke-width="1"/>
<rect x="19.9" y="845" width="16" height="16" fill="#f2f2f2" stroke="#b9b9b9" stroke-width="1"/>
<rect x="35.9" y="845" width="16" height="16" fill="#f2f2f2" stroke="#b9b9b9" stroke-width="1"/>
<rect x="51.8" y="845" width="16" height="16" fill="#f2f2f2" stroke="#b9b9b9" stroke-width="1"/>
<path d="M14.5 848.5V858L8.5 853.2Z" fill="#111"/>
<path d="M25 848.5V858L31 853.2Z" fill="#111"/>
<path d="M40 848.5V858L45.5 853.2Z" fill="#111"/><path d="M46.6 848.5V858" stroke="#111" stroke-width="1.4"/>
<path d="M60 848.5V858M55.2 853.2H64.8" stroke="#111" stroke-width="1.8"/>
<g stroke="#555" stroke-width="1" fill="none">
<path d="M75 846L82.4 860.5"/>
<path d="M130.5 846L138 860.5M134 853L130 860.5"/>
<path d="M176.5 846L184.5 860.5M180.3 853L176 860.5"/>
<path d="M239.7 846L232.3 860.5"/>
</g>
<rect x="1503" y="845" width="14" height="14" fill="#e9e9e9"/>
<path d="M1506 850H1514.5L1510.2 855Z" fill="#111"/>
</svg>
<span class="t" style="left:88.0px;top:848px;font-size:11px;color:#555;letter-spacing:-0.551px;">Layout1</span>
<span class="t" style="left:143.4px;top:848px;font-size:11px;color:#555;letter-spacing:-0.714px;">Model</span>
<span class="t" style="left:188.0px;top:848px;font-size:11px;color:#222;font-weight:700;letter-spacing:-0.127px;">Layouts</span>
<div class="a" style="left:0px;top:861.2px;width:1740px;height:6px;background:linear-gradient(#8e949a,#9ca2a7 35%,#adb1b5 80%,#b4b7ba)"></div>
<div class="a" style="left:0px;top:868px;width:1740px;height:29px;background:linear-gradient(90deg,#e4e4e4,#d8d8d8 30%,#c7c7c7 70%,#bdbdbd)"></div>
<div class="a" style="left:0px;top:867px;width:1740px;height:1px;background:#7c8286"></div>
<span class="t" style="left:-20.7px;top:872px;font-size:12.7px;color:#3a4452;font-family:'Liberation Mono', monospace;-webkit-text-stroke:0.3px;">Undo: (Layout switch)</span>
<span class="t" style="left:-20.7px;top:886px;font-size:12.7px;color:#3a4452;font-family:'Liberation Mono', monospace;-webkit-text-stroke:0.3px;">Command:</span>
</div>
</body></html>
